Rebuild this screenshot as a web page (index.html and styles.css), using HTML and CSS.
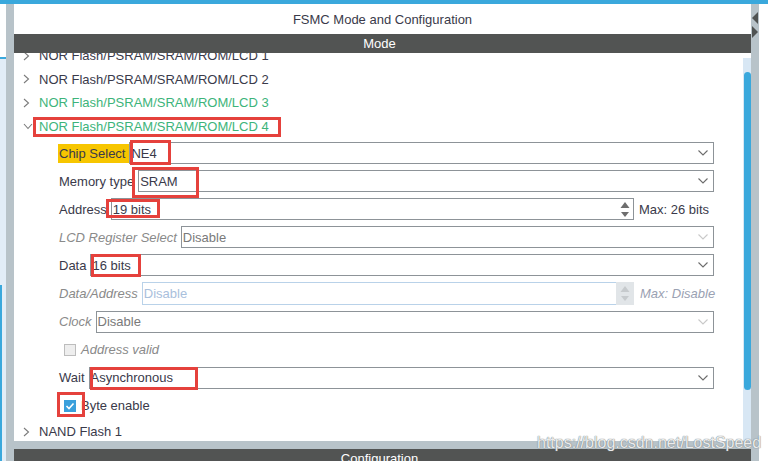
FILE: index.html
```html
<!DOCTYPE html>
<html lang="en">
<head>
  <meta charset="UTF-8">
  <title>FSMC Mode and Configuration</title>
  <link rel="stylesheet" href="styles.css">
</head>
<body>
  <div class="topbar"></div>
  <div class="layout">
    <!-- sliver of the neighbour panel -->
    <div class="side-left">
      <div class="side-left-top"></div>
      <div class="side-left-rest"><div class="side-left-line"></div></div>
    </div>
    <div class="gutter"></div>

    <div class="main">
      <div class="title">FSMC Mode and Configuration</div>
      <div class="bar">Mode</div>
      <div class="content">
        <div class="tree">
          <div class="tree-list">
            <div class="tree-row">
              <span class="chev"><svg width="7" height="10" viewBox="0 0 7 10"><polyline points="1,1 5.5,5 1,9" /></svg></span>
              <span>NOR Flash/PSRAM/SRAM/ROM/LCD 1</span>
            </div>
            <div class="tree-row">
              <span class="chev"><svg width="7" height="10" viewBox="0 0 7 10"><polyline points="1,1 5.5,5 1,9" /></svg></span>
              <span>NOR Flash/PSRAM/SRAM/ROM/LCD 2</span>
            </div>
            <div class="tree-row green">
              <span class="chev"><svg width="7" height="10" viewBox="0 0 7 10"><polyline points="1,1 5.5,5 1,9" /></svg></span>
              <span>NOR Flash/PSRAM/SRAM/ROM/LCD 3</span>
            </div>
            <div class="tree-row green">
              <span class="chev"><svg width="10" height="7" viewBox="0 0 10 7"><polyline points="1,1 5,5.5 9,1" /></svg></span>
              <span>NOR Flash/PSRAM/SRAM/ROM/LCD 4</span>
              <span class="mark mark-lcd4"></span>
            </div>

            <div class="fields">
              <div class="field">
                <span class="label hl">Chip Select</span>
                <div class="select"><span class="value">NE4</span><svg class="arrow" width="10" height="6" viewBox="0 0 10 6"><polyline points="0.5,0.5 5,5 9.5,0.5" /></svg></div>
                <span class="mark mark-ne4"></span>
              </div>
              <div class="field">
                <span class="label">Memory type</span>
                <div class="select"><span class="value">SRAM</span><svg class="arrow" width="10" height="6" viewBox="0 0 10 6"><polyline points="0.5,0.5 5,5 9.5,0.5" /></svg></div>
                <span class="mark mark-sram"></span>
              </div>
              <div class="field">
                <span class="label">Address</span>
                <div class="spin"><span class="value">19 bits</span>
                  <svg class="spin-arrows" width="10" height="19" viewBox="0 0 10 19"><polygon points="0.5,8 5,2 9.5,8" /><polygon points="1,12 9,12 5,17" /></svg>
                </div>
                <span class="max">Max: 26 bits</span>
                <span class="mark mark-addr"></span>
              </div>
              <div class="field">
                <span class="label off">LCD Register Select</span>
                <div class="select dis"><span class="value">Disable</span><svg class="arrow" width="10" height="6" viewBox="0 0 10 6"><polyline points="0.5,0.5 5,5 9.5,0.5" /></svg></div>
              </div>
              <div class="field">
                <span class="label">Data</span>
                <div class="select"><span class="value">16 bits</span><svg class="arrow" width="10" height="6" viewBox="0 0 10 6"><polyline points="0.5,0.5 5,5 9.5,0.5" /></svg></div>
                <span class="mark mark-data"></span>
              </div>
              <div class="field">
                <span class="label off">Data/Address</span>
                <div class="spin dis"><span class="value">Disable</span></div>
                <div class="spin-btn"><svg width="10" height="19" viewBox="0 0 10 19"><polygon points="0.5,8 5,2 9.5,8" /><polygon points="1,12 9,12 5,17" /></svg></div>
                <span class="max off">Max: Disable</span>
              </div>
              <div class="field">
                <span class="label off">Clock</span>
                <div class="select dis"><span class="value">Disable</span><svg class="arrow" width="10" height="6" viewBox="0 0 10 6"><polyline points="0.5,0.5 5,5 9.5,0.5" /></svg></div>
              </div>
              <div class="field">
                <span class="check"></span>
                <span class="label off">Address valid</span>
              </div>
              <div class="field">
                <span class="label">Wait</span>
                <div class="select"><span class="value">Asynchronous</span><svg class="arrow" width="10" height="6" viewBox="0 0 10 6"><polyline points="0.5,0.5 5,5 9.5,0.5" /></svg></div>
                <span class="mark mark-wait"></span>
              </div>
              <div class="field">
                <span class="check on"><svg width="12" height="12" viewBox="0 0 12 12"><polyline points="2.5,6 5,8.5 9.5,3.5" /></svg></span>
                <span class="label">Byte enable</span>
                <span class="mark mark-byte"></span>
              </div>
            </div>

            <div class="tree-row">
              <span class="chev"><svg width="7" height="10" viewBox="0 0 7 10"><polyline points="1,1 5.5,5 1,9" /></svg></span>
              <span>NAND Flash 1</span>
            </div>
          </div>
        </div>
        <div class="scroll"><div class="thumb"></div></div>
      </div>
      <div class="bar bar-bottom">Configuration</div>
    </div>

    <div class="gutter gutter-right">
      <svg width="8" height="30" viewBox="0 0 8 30"><polygon points="7,4 1,10 7,16" /><polygon points="1,18 7,24 1,30" /></svg>
    </div>
    <div class="side-right"></div>
  </div>
  <div class="watermark">https://blog.csdn.net/LostSpeed</div>
</body>
</html>
```

FILE: styles.css
```css
* {
  box-sizing: border-box;
}
body {
  margin: 0;
  width: 768px;
  height: 461px;
  overflow: hidden;
  position: relative;
  font-family: "Liberation Sans", Arial, sans-serif;
  font-size: 13px;
  color: #3a3a4a;
  background: #ffffff;
}
.topbar {
  height: 4px;
  background: #3aa8dc;
}
.layout {
  display: flex;
  height: 457px;
  overflow: hidden;
}
.side-left {
  width: 6px;
  display: flex;
  flex-direction: column;
}
.side-left-top {
  height: 55px;
  flex-shrink: 0;
  background: #ffffff;
  border-bottom: 2px solid #3aa8dc;
}
.side-left-rest {
  flex: 1;
  background: #e2edf7;
  display: flex;
  flex-direction: column;
  justify-content: flex-end;
}
.side-left-line {
  width: 2px;
  height: 176px;
  background: #3aa8dc;
}
.gutter {
  width: 8px;
  background: #b8c3c9;
}
.gutter-right svg {
  display: block;
  margin-top: 4px;
  fill: #505352;
}
.side-right {
  width: 9px;
  background: #ffffff;
}
.main {
  width: 737px;
  display: flex;
  flex-direction: column;
  background: #b8c3c9;
  overflow: hidden;
}
.main > * {
  flex-shrink: 0;
}
.title {
  height: 30px;
  background: #ffffff;
  display: flex;
  align-items: center;
  justify-content: center;
  padding-top: 1px;
}
.bar {
  height: 19px;
  background: #525453;
  color: #ffffff;
  display: flex;
  align-items: center;
  justify-content: center;
  padding-right: 6px;
}
.bar-bottom {
  margin-top: 8px;
  align-items: flex-start;
  padding-top: 2px;
}
.content {
  height: 388px;
  display: flex;
  background: #ffffff;
}
.tree {
  width: 729px;
  overflow: hidden;
}
.tree-list {
  margin-top: -9.25px;
}
.tree-row {
  position: relative;
  height: 23.5px;
  display: flex;
  align-items: center;
  padding-left: 9px;
  white-space: nowrap;
}
.tree-row.green {
  color: #3db47a;
}
.chev {
  width: 16px;
  display: flex;
  align-items: center;
}
.chev svg {
  fill: none;
  stroke: #7b7b7b;
  stroke-width: 1.1;
}
.fields {
  padding-top: 1.25px;
}
.field {
  position: relative;
  height: 28.1px;
  display: flex;
  align-items: center;
  padding-left: 45px;
  padding-right: 29px;
  white-space: nowrap;
}
.label {
  margin-right: 4px;
}
.label.hl {
  background: #f7c600;
  margin-left: -1px;
  padding: 2px 4px 2px 1px;
  margin-right: 0;
}
.label.off {
  color: #8a8a8a;
  font-style: italic;
}
.select,
.spin {
  flex: 1;
  height: 22px;
  border: 1px solid #8d9398;
  display: flex;
  align-items: center;
  padding-left: 1px;
  padding-right: 5px;
}
.select .value,
.spin .value {
  flex: 1;
}
.arrow {
  fill: none;
  stroke: #6c6c6c;
  stroke-width: 1.1;
}
.select.dis .value {
  color: #7a7a7a;
}
.select.dis .arrow {
  stroke: #c9c9c9;
}
.spin {
  padding-right: 3px;
}
.spin-arrows {
  fill: #6e6e6e;
}
.spin.dis {
  height: 23px;
  border-color: #b9d2e9;
  border-right: none;
  color: #a9c0dc;
}
.spin-btn {
  width: 18px;
  height: 23px;
  background: #e1e5e8;
  display: flex;
  align-items: center;
  justify-content: center;
}
.spin-btn svg {
  fill: #c6cacd;
}
.max {
  width: 80px;
  padding-left: 5px;
}
.max.off {
  color: #9aa1b2;
  font-style: italic;
  padding-left: 6px;
}
.check {
  width: 12px;
  height: 12px;
  margin-left: 5px;
  margin-right: 5px;
  background: #eeeeee;
  border: 1px solid #bdbdbd;
}
.check.on {
  background: #3aa0dc;
  border-color: #3aa0dc;
}
.check svg {
  display: block;
  margin: -1px;
  fill: none;
  stroke: #ffffff;
  stroke-width: 1.6;
}
.mark {
  position: absolute;
  border: 3px solid #e5413c;
}
.mark-lcd4 {
  left: 19px;
  top: 2.5px;
  width: 248px;
  height: 20px;
}
.mark-ne4 {
  left: 116px;
  top: 1px;
  width: 41px;
  height: 25px;
}
.mark-sram {
  left: 118px;
  top: 0;
  width: 67px;
  height: 31px;
}
.mark-addr {
  left: 92px;
  top: 3.5px;
  width: 54px;
  height: 19px;
}
.mark-data {
  left: 77px;
  top: 2.5px;
  width: 50px;
  height: 23px;
}
.mark-wait {
  left: 75.5px;
  top: 3.5px;
  width: 108px;
  height: 23px;
}
.mark-byte {
  left: 43px;
  top: 0;
  width: 28px;
  height: 25.5px;
}
.scroll {
  width: 8px;
  margin-top: 5px;
  background: #d8e7f4;
  padding: 14px 0.5px 50px;
}
.thumb {
  height: 318px;
  background: #3aa8dc;
  border-radius: 4px;
}
.watermark {
  position: absolute;
  left: 537px;
  top: 434px;
  font-size: 16px;
  color: rgba(255, 255, 255, 0.85);
  text-shadow: 0 0 1px #7c8488, 0 0 1px #7c8488;
  white-space: nowrap;
}
```
